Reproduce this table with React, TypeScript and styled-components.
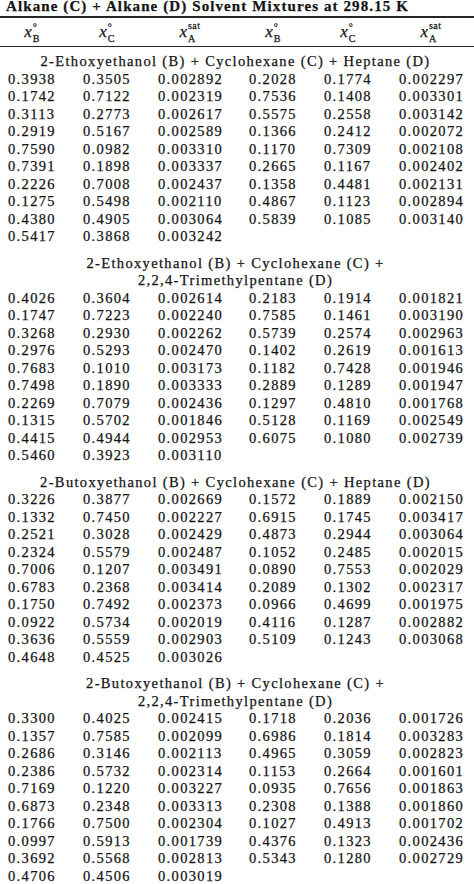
import { createGlobalStyle, styled } from 'styled-components';

const GlobalStyle = createGlobalStyle`
  html, body {
    margin: 0;
    padding: 0;
    background: #fff;
  }
  body {
    overflow: hidden;
    font-family: "Liberation Serif", "Times New Roman", serif;
    color: #141414;
    -webkit-text-stroke: 0.25px #141414;
  }
`;

type Group = {
  title: string[];
  rows: string[][];
};

const groups: Group[] = [
  {
    title: ['2-Ethoxyethanol (B) + Cyclohexane (C) + Heptane (D)'],
    rows: [
      ['0.3938', '0.3505', '0.002892', '0.2028', '0.1774', '0.002297'],
      ['0.1742', '0.7122', '0.002319', '0.7536', '0.1408', '0.003301'],
      ['0.3113', '0.2773', '0.002617', '0.5575', '0.2558', '0.003142'],
      ['0.2919', '0.5167', '0.002589', '0.1366', '0.2412', '0.002072'],
      ['0.7590', '0.0982', '0.003310', '0.1170', '0.7309', '0.002108'],
      ['0.7391', '0.1898', '0.003337', '0.2665', '0.1167', '0.002402'],
      ['0.2226', '0.7008', '0.002437', '0.1358', '0.4481', '0.002131'],
      ['0.1275', '0.5498', '0.002110', '0.4867', '0.1123', '0.002894'],
      ['0.4380', '0.4905', '0.003064', '0.5839', '0.1085', '0.003140'],
      ['0.5417', '0.3868', '0.003242'],
    ],
  },
  {
    title: ['2-Ethoxyethanol (B) + Cyclohexane (C) +', '2,2,4-Trimethylpentane (D)'],
    rows: [
      ['0.4026', '0.3604', '0.002614', '0.2183', '0.1914', '0.001821'],
      ['0.1747', '0.7223', '0.002240', '0.7585', '0.1461', '0.003190'],
      ['0.3268', '0.2930', '0.002262', '0.5739', '0.2574', '0.002963'],
      ['0.2976', '0.5293', '0.002470', '0.1402', '0.2619', '0.001613'],
      ['0.7683', '0.1010', '0.003173', '0.1182', '0.7428', '0.001946'],
      ['0.7498', '0.1890', '0.003333', '0.2889', '0.1289', '0.001947'],
      ['0.2269', '0.7079', '0.002436', '0.1297', '0.4810', '0.001768'],
      ['0.1315', '0.5702', '0.001846', '0.5128', '0.1169', '0.002549'],
      ['0.4415', '0.4944', '0.002953', '0.6075', '0.1080', '0.002739'],
      ['0.5460', '0.3923', '0.003110'],
    ],
  },
  {
    title: ['2-Butoxyethanol (B) + Cyclohexane (C) + Heptane (D)'],
    rows: [
      ['0.3226', '0.3877', '0.002669', '0.1572', '0.1889', '0.002150'],
      ['0.1332', '0.7450', '0.002227', '0.6915', '0.1745', '0.003417'],
      ['0.2521', '0.3028', '0.002429', '0.4873', '0.2944', '0.003064'],
      ['0.2324', '0.5579', '0.002487', '0.1052', '0.2485', '0.002015'],
      ['0.7006', '0.1207', '0.003491', '0.0890', '0.7553', '0.002029'],
      ['0.6783', '0.2368', '0.003414', '0.2089', '0.1302', '0.002317'],
      ['0.1750', '0.7492', '0.002373', '0.0966', '0.4699', '0.001975'],
      ['0.0922', '0.5734', '0.002019', '0.4116', '0.1287', '0.002882'],
      ['0.3636', '0.5559', '0.002903', '0.5109', '0.1243', '0.003068'],
      ['0.4648', '0.4525', '0.003026'],
    ],
  },
  {
    title: ['2-Butoxyethanol (B) + Cyclohexane (C) +', '2,2,4-Trimethylpentane (D)'],
    rows: [
      ['0.3300', '0.4025', '0.002415', '0.1718', '0.2036', '0.001726'],
      ['0.1357', '0.7585', '0.002099', '0.6986', '0.1814', '0.003283'],
      ['0.2686', '0.3146', '0.002113', '0.4965', '0.3059', '0.002823'],
      ['0.2386', '0.5732', '0.002314', '0.1153', '0.2664', '0.001601'],
      ['0.7169', '0.1220', '0.003227', '0.0935', '0.7656', '0.001863'],
      ['0.6873', '0.2348', '0.003313', '0.2308', '0.1388', '0.001860'],
      ['0.1766', '0.7500', '0.002304', '0.1027', '0.4913', '0.001702'],
      ['0.0997', '0.5913', '0.001739', '0.4376', '0.1323', '0.002436'],
      ['0.3692', '0.5568', '0.002813', '0.5343', '0.1280', '0.002729'],
      ['0.4706', '0.4506', '0.003019'],
    ],
  },
];

const headers: { sup: string; sub: string }[] = [
  { sup: '°', sub: 'B' },
  { sup: '°', sub: 'C' },
  { sup: 'sat', sub: 'A' },
  { sup: '°', sub: 'B' },
  { sup: '°', sub: 'C' },
  { sup: 'sat', sub: 'A' },
];

const Page = styled.div`
  width: 474px;
  height: 884px;
  overflow: hidden;
`;

const Caption = styled.div`
  margin-top: -3px;
  padding-left: 6px;
  font-size: 15px;
  font-weight: bold;
  letter-spacing: 1.1px;
  line-height: 18px;
  white-space: nowrap;
`;

const Rule = styled.div<{ $gap?: number }>`
  height: 1.5px;
  margin-top: ${({ $gap }) => $gap ?? 0}px;
  background: #262626;
`;

const Grid = styled.div`
  display: grid;
  grid-template-columns: 48px 48px 64px 48px 48px 64px;
  column-gap: 27px;
  padding-left: 8px;
`;

const HeadRow = styled(Grid)`
  height: 28px;
  align-items: center;
`;

const HeadCell = styled.div`
  display: flex;
  justify-content: center;
  padding-top: 1px;
`;

const Symbol = styled.span`
  font-style: italic;
  font-size: 17px;
  line-height: 16px;
`;

const Scripts = styled.span<{ $word: boolean }>`
  display: inline-flex;
  flex-direction: column;
  margin-left: 1px;
  font-size: 10px;
  letter-spacing: 0.5px;
  line-height: 8px;

  & > span:first-child {
    transform: translateY(${({ $word }) => ($word ? -2 : 0)}px);
  }
`;

const Sub = styled.span`
  transform: translateY(3px);
`;

const Body = styled(Grid)`
  padding-top: 6px;
  font-size: 14.5px;
  letter-spacing: 1.35px;
  line-height: 17.5px;
`;

const GroupTitle = styled.div<{ $first: boolean }>`
  grid-column: 1 / -1;
  margin-top: ${({ $first }) => ($first ? 0 : 9)}px;
  text-align: center;
  white-space: nowrap;
`;

const Cell = styled.div`
  white-space: nowrap;
`;

const Filler = styled.div`
  grid-column: span 3;
`;

const Header = ({ sup, sub }: { sup: string; sub: string }) => (
  <HeadCell>
    <Symbol>x</Symbol>
    <Scripts $word={sup.length > 1}>
      <span>{sup}</span>
      <Sub>{sub}</Sub>
    </Scripts>
  </HeadCell>
);

export default function App() {
  return (
    <Page>
      <GlobalStyle />
      <Caption>Alkane (C) + Alkane (D) Solvent Mixtures at 298.15 K</Caption>
      <Rule $gap={1} />
      <HeadRow>
        {headers.map((h, i) => (
          <Header key={i} sup={h.sup} sub={h.sub} />
        ))}
      </HeadRow>
      <Rule />
      <Body>
        {groups.map((g, gi) => [
          <GroupTitle key={`t${gi}`} $first={gi === 0}>
            {g.title.map((line, li) => (
              <div key={li}>{line}</div>
            ))}
          </GroupTitle>,
          ...g.rows.flatMap((row, ri) =>
            row.map((v, ci) => <Cell key={`${gi}-${ri}-${ci}`}>{v}</Cell>)
          ),
          g.rows[g.rows.length - 1].length < 6 ? <Filler key={`f${gi}`} /> : null,
        ])}
      </Body>
    </Page>
  );
}
